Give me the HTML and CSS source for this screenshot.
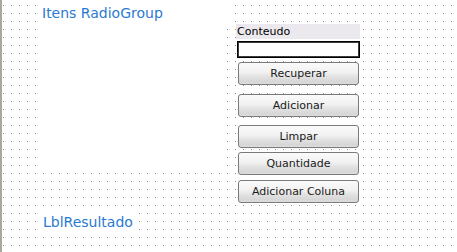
FILE: index.html
```html
<!DOCTYPE html>
<html lang="pt">
<head>
  <meta charset="UTF-8">
  <title>Form Designer</title>
  <link rel="stylesheet" href="styles.css">
</head>
<body>
  <div class="canvas">
    <div class="left-col">
      <div class="radio-group">
        <div class="caption">Itens RadioGroup</div>
      </div>
      <div class="result-label">LblResultado</div>
    </div>

    <div class="right-col">
      <div class="field-label">Conteudo</div>
      <input class="field-input" type="text">
      <button class="btn btn-recuperar">Recuperar</button>
      <button class="btn btn-adicionar">Adicionar</button>
      <button class="btn btn-limpar">Limpar</button>
      <button class="btn btn-quantidade">Quantidade</button>
      <button class="btn btn-coluna">Adicionar Coluna</button>
    </div>
  </div>
</body>
</html>
```

FILE: styles.css
```css
:root {
  --grid-dot: #8a8a8a;
  --caption-blue: #2a7ad2;
  --frame: #aca899;
  --btn-border: #7a7a7a;
}

* {
  box-sizing: border-box;
  margin: 0;
  padding: 0;
}

body {
  font-family: "DejaVu Sans", Verdana, sans-serif;
  background: #fff;
  overflow: hidden;
}

/* designer surface with 8px dot grid */
.canvas {
  display: flex;
  width: 457px;
  height: 252px;
  border-left: 2px solid var(--frame);
  background-color: #fff;
  background-image:
    linear-gradient(to bottom, transparent 1px, #fff 1px),
    linear-gradient(to right, var(--grid-dot) 1px, transparent 1px);
  background-size: 8px 8px;
  background-position: 1px 5px;
}

.left-col {
  display: flex;
  flex-direction: column;
  width: 188px;
  margin-left: 35px;
}

.radio-group {
  height: 168px;
  background: #fff;
}

.caption {
  width: 195px;
  height: 24px;
  padding: 3px 0 0 5px;
  line-height: 20px;
  font-size: 14px;
  color: var(--caption-blue);
  background: #fff;
}

.result-label {
  align-self: flex-start;
  margin-top: 44px;
  padding: 0 4px 0 6px;
  height: 20px;
  line-height: 20px;
  font-size: 14px;
  color: var(--caption-blue);
  background: #fff;
}

.right-col {
  display: flex;
  flex-direction: column;
  align-items: flex-start;
  margin-left: 11px;
  padding-top: 24px;
}

.field-label {
  width: 124px;
  height: 15px;
  padding-left: 1px;
  line-height: 15px;
  font-size: 11px;
  color: #000;
  background: #ebe9ed;
}

.field-input {
  width: 123px;
  height: 17px;
  margin: 2px 0 0 1px;
  border: 1px solid #000;
  box-shadow: inset 0 0 0 1px #3c3c3c;
  background: #fff;
  outline: none;
}

.btn {
  width: 121px;
  height: 23px;
  margin-left: 2px;
  border: 1px solid var(--btn-border);
  border-radius: 3px;
  background: linear-gradient(to bottom, #fbfbfb 0%, #f1f1f1 45%, #e2e2e2 65%, #d6d6d6 90%, #dedede 100%);
  font-family: "DejaVu Sans", Verdana, sans-serif;
  font-size: 11px;
  color: #1a1a1a;
  line-height: 20px;
  text-align: center;
  cursor: pointer;
}

.btn-recuperar { margin-top: 4px; }
.btn-adicionar { margin-top: 9px; }
.btn-limpar { margin-top: 8px; }
.btn-quantidade { margin-top: 4px; }
.btn-coluna { margin-top: 5px; }
```
